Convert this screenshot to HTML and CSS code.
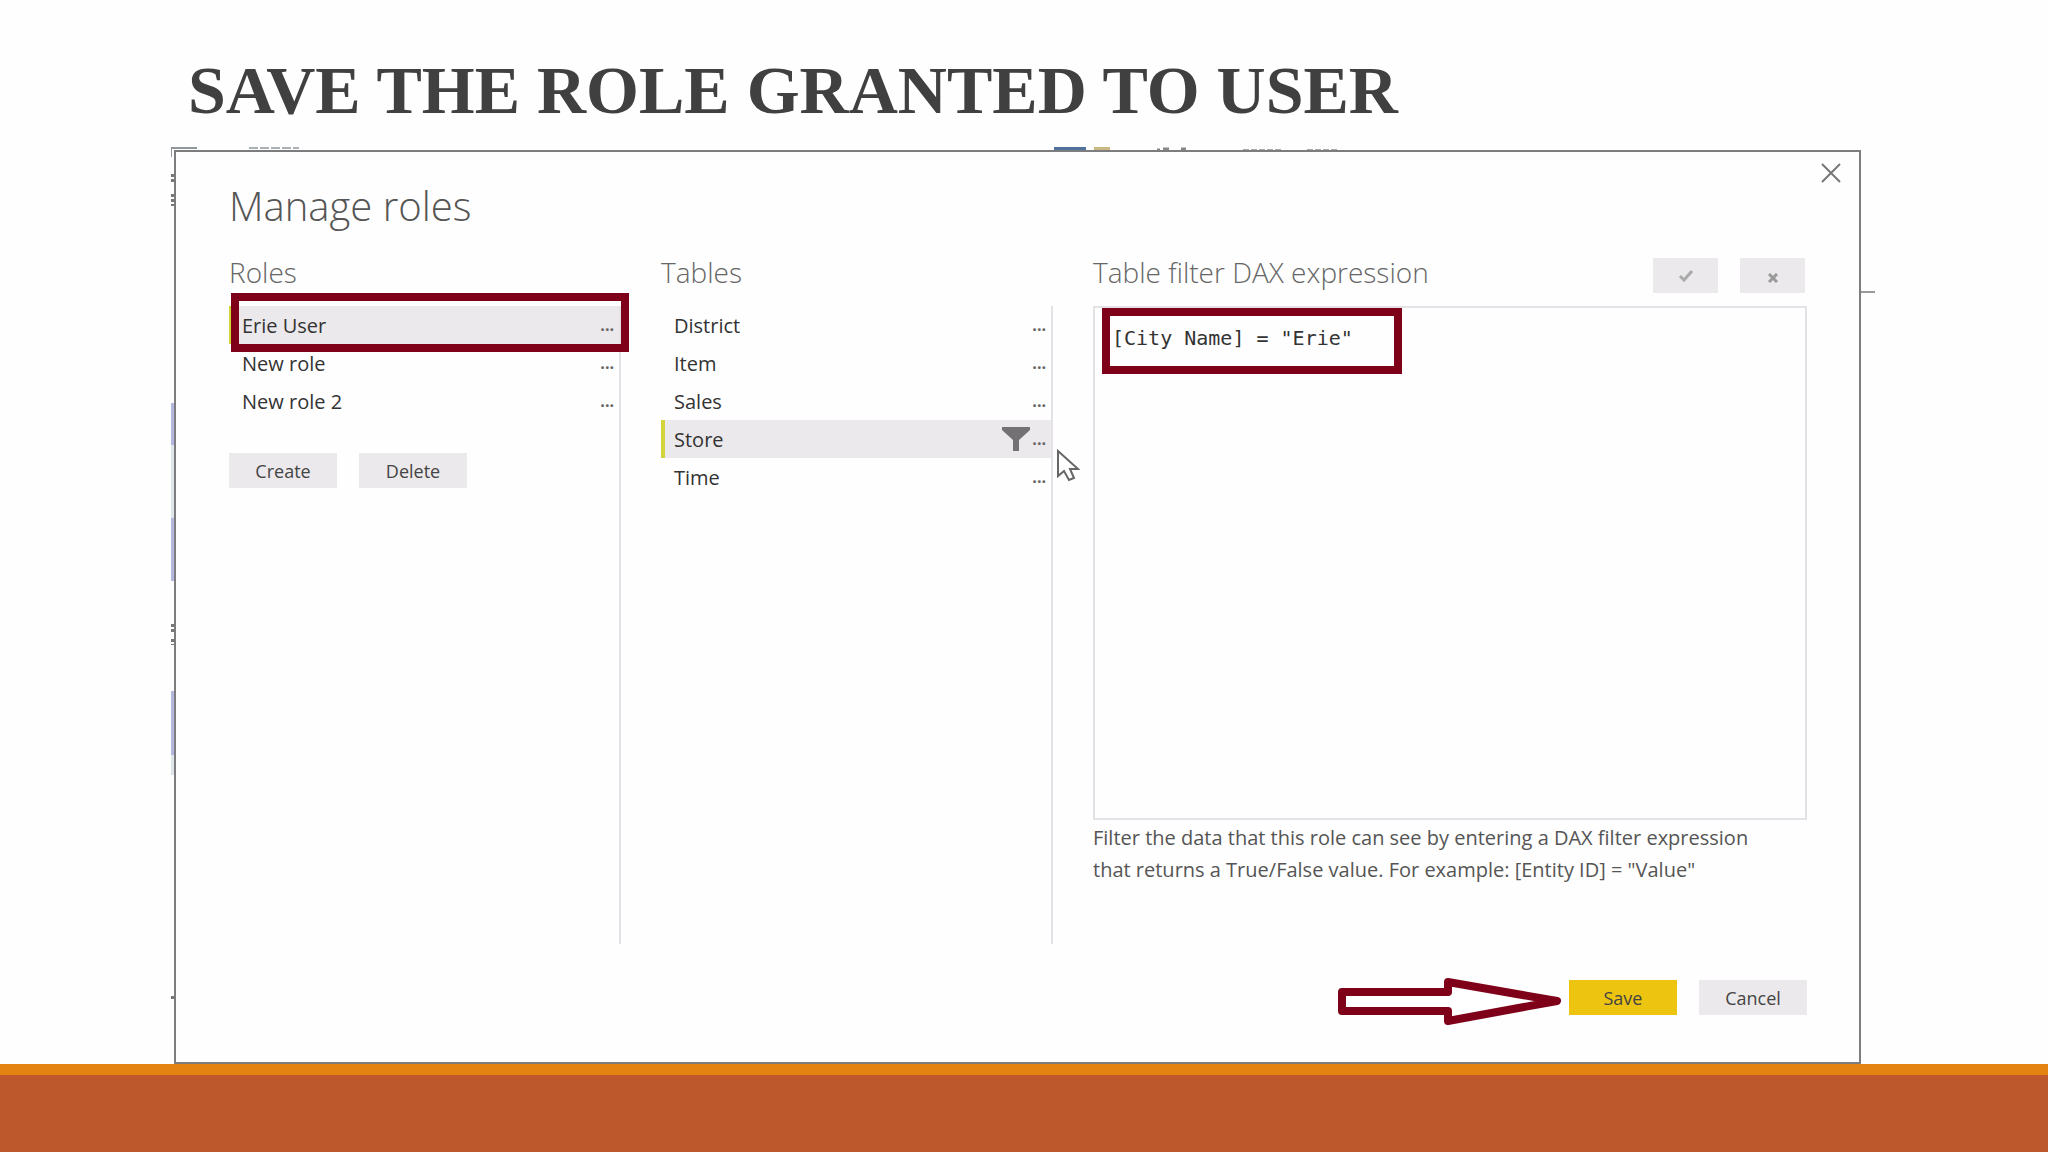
FILE: index.html
```
<!DOCTYPE html>
<html lang="en">
<head>
    <meta charset="UTF-8">
    <meta name="viewport" content="width=device-width, initial-scale=1.0">
    <title>Save the role granted to user</title>
    <link rel="stylesheet" href="styles.css">
</head>
<body>
    <h1>SAVE THE ROLE GRANTED TO USER</h1>

    <main class="stage">
        <!-- Bits of the report window that show behind the dialog -->
        <div class="behind behind-top">
            <svg width="1240" height="12" viewBox="0 0 1240 12">
                <path d="M0 1H26M0 1V10" stroke="#8f979d" stroke-width="2" fill="none"/>
                <path d="M78 1H128" stroke="#aab0b4" stroke-width="2" stroke-dasharray="9 2"/>
                <rect x="883" width="32" height="5" fill="#4f719c"/>
                <rect x="923" width="16" height="5" fill="#c9b981"/>
                <path d="M986 3h3M992 2h6M1010 2h5" stroke="#888" stroke-width="3"/>
                <path d="M1072 3h40M1136 3h30" stroke="#aaa" stroke-width="2" stroke-dasharray="6 2"/>
            </svg>
        </div>
        <div class="behind behind-left">
            <svg width="6" height="880" viewBox="0 0 6 880">
                <path d="M2 27v10M2 47v12M2 477v8M2 492v6M2 849v3" stroke="#777" stroke-width="4" stroke-dasharray="3 2"/>
                <path d="M2 256v42M2 371v63M2 544v64" stroke="#b4b8e0" stroke-width="4"/>
                <path d="M2 298v73M2 608v20" stroke="#dfe6ea" stroke-width="4"/>
            </svg>
        </div>
        <div class="behind behind-right"></div>

        <section class="dialog">
            <button type="button" class="close" aria-label="Close">
                <svg width="22" height="22" viewBox="0 0 22 22"><path d="M2 2L20 20M20 2L2 20" stroke="#777" stroke-width="2"/></svg>
            </button>
            <h2>Manage roles</h2>

            <div class="columns">
                <div class="column">
                    <h3>Roles</h3>
                    <div class="panel">
                        <ul>
                            <li class="selected marked">Erie User <button type="button" class="more" aria-label="More options">...</button></li>
                            <li>New role <button type="button" class="more" aria-label="More options">...</button></li>
                            <li>New role 2 <button type="button" class="more" aria-label="More options">...</button></li>
                        </ul>
                        <div class="actions">
                            <button type="button" class="btn">Create</button>
                            <button type="button" class="btn">Delete</button>
                        </div>
                    </div>
                </div>

                <div class="column">
                    <h3>Tables</h3>
                    <div class="panel">
                        <ul>
                            <li>District <button type="button" class="more" aria-label="More options">...</button></li>
                            <li>Item <button type="button" class="more" aria-label="More options">...</button></li>
                            <li>Sales <button type="button" class="more" aria-label="More options">...</button></li>
                            <li class="selected">Store
                                <svg class="funnel" width="28" height="24" viewBox="0 0 28 24"><path d="M0 0H28V3L17 13V24H11V13L0 3Z" fill="#737173"/></svg>
                                <button type="button" class="more" aria-label="More options">...</button>
                                <svg class="cursor" width="24" height="34" viewBox="0 0 24 34"><path d="M2 2V27L8 22L13 31L18 29L14 20H22Z" fill="#fff" stroke="#666" stroke-width="2"/></svg>
                            </li>
                            <li>Time <button type="button" class="more" aria-label="More options">...</button></li>
                        </ul>
                    </div>
                </div>

                <div class="column expression">
                    <div class="expression-head">
                        <h3><label for="dax">Table filter DAX expression</label></h3>
                        <button type="button" class="btn small" aria-label="Apply">
                            <svg width="16" height="14" viewBox="0 0 16 14"><path d="M2 7L6 11L14 2" fill="none" stroke="#aaa" stroke-width="3"/></svg>
                        </button>
                        <button type="button" class="btn small" aria-label="Revert">
                            <svg width="10" height="10" viewBox="0 0 10 10"><path d="M1 1L9 9M9 1L1 9" stroke="#999" stroke-width="3"/></svg>
                        </button>
                    </div>
                    <div class="editor">
                        <textarea id="dax" spellcheck="false">[City Name] = "Erie"</textarea>
                    </div>
                    <p>Filter the data that this role can see by entering a DAX filter expression that returns a True/False value. For example: [Entity ID] = "Value"</p>
                </div>
            </div>

            <div class="buttons">
                <svg class="arrow" width="226" height="50" viewBox="0 0 226 50"><path d="M5 15H111V5L220 24L111 44V34H5Z" fill="#fff" stroke="#7f0019" stroke-width="8" stroke-linejoin="round"/></svg>
                <button type="button" class="btn save">Save</button>
                <button type="button" class="btn">Cancel</button>
            </div>
        </section>
    </main>

    <footer></footer>
</body>
</html>
```

FILE: styles.css
```
*,
*::after {
    margin: 0;
    padding: 0;
    box-sizing: border-box;
}

body {
    min-height: 100vh;
    display: flex;
    flex-direction: column;
    background: #fefefe;
    font-family: "Open Sans", "Noto Sans", sans-serif;
    font-size: 20px;
    color: #444;
}

h1 {
    padding: 50px 188px 0;
    height: 150px;
    font: bold 68px/80px "Liberation Serif", serif;
    color: #404040;
}

.stage {
    flex: 1;
    display: flex;
    position: relative;
    margin: 0 187px 0 174px;
}

.dialog {
    flex: 1;
    display: flex;
    flex-direction: column;
    position: relative;
    padding: 28px 52px 47px 53px;
    border: 2px solid #7d7d80;
    background: #fefefe;
}

/* Background window, peeking out around the dialog */
.behind {
    position: absolute;
    line-height: 0;
}

.behind-top {
    top: -3px;
    left: -3px;
}

.behind-left {
    top: -3px;
    left: -3px;
}

.behind-right {
    top: 141px;
    right: -14px;
    width: 14px;
    height: 2px;
    background: #999;
}

.close {
    position: absolute;
    top: 10px;
    right: 17px;
    border: none;
    background: none;
    line-height: 0;
}

h2 {
    font-size: 40px;
    font-weight: 300;
    line-height: 52px;
    color: #555;
}

h3 {
    font-size: 28px;
    font-weight: 300;
    line-height: 36px;
    color: #666;
}

.columns {
    flex: 1;
    display: flex;
    gap: 40px;
    margin-top: 22px;
}

.column {
    flex: 392;
    display: flex;
    flex-direction: column;
}

.expression {
    flex: 714;
}

.panel {
    flex: 1;
    margin-top: 16px;
    border-right: 2px solid #e4e2e6;
}

ul {
    list-style: none;
}

li {
    display: flex;
    align-items: center;
    position: relative;
    height: 38px;
    padding: 0 5px 0 9px;
    border-left: 4px solid transparent;
    color: #333;
}

.selected {
    background: #ebe9eb;
    border-left-color: #d3d33c;
}

/* Dark red callouts */
.marked::after,
.editor::after {
    content: "";
    position: absolute;
    border: 8px solid #7f0019;
}

.marked::after {
    top: -13px;
    bottom: -8px;
    left: -2px;
    right: -10px;
}

.editor::after {
    top: 2px;
    left: 9px;
    width: 300px;
    height: 66px;
}

.more {
    margin-left: auto;
    border: none;
    background: none;
    font: bold 16px/24px "Open Sans", sans-serif;
    color: #666;
}

.funnel {
    margin-left: auto;
}

.funnel + .more {
    margin-left: 2px;
}

.cursor {
    position: absolute;
    top: 29px;
    right: -29px;
    z-index: 1;
}

.actions {
    display: flex;
    gap: 22px;
    margin-top: 33px;
}

.btn {
    width: 108px;
    height: 35px;
    border: none;
    background: #ebe9eb;
    font-family: inherit;
    font-size: 18px;
    color: #444;
}

.expression-head {
    display: flex;
    gap: 22px;
    height: 36px;
    padding-right: 2px;
}

.expression-head h3 {
    flex: 1;
}

.small {
    width: 65px;
    margin-top: 4px;
}

.editor {
    flex: 1;
    display: flex;
    position: relative;
    margin-top: 16px;
}

textarea {
    flex: 1;
    padding: 18px 17px;
    border: 2px solid #e4e2e6;
    background: #fefefe;
    resize: none;
    outline: none;
    font: 20px/24px "DejaVu Sans Mono", monospace;
    color: #333;
}

p {
    height: 124px;
    padding: 2px 40px 0 0;
    line-height: 32px;
    color: #555;
}

.buttons {
    display: flex;
    justify-content: flex-end;
    align-items: center;
    gap: 22px;
    margin-top: 36px;
}

.arrow {
    margin: -4px -16px -12px 0;
}

.save {
    background: #edc511;
}

footer {
    height: 88px;
    border-top: 11px solid #e48312;
    background: #bd582c;
}
```
